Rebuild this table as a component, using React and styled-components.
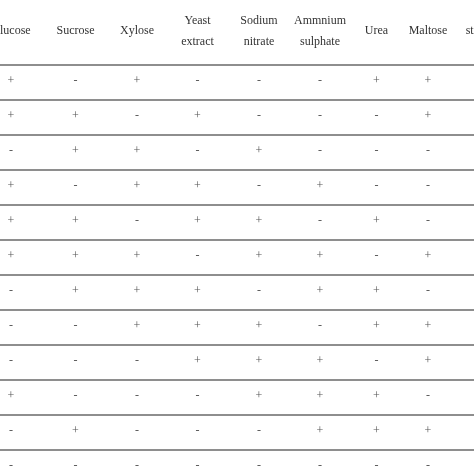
import React from "react";
import styled, { createGlobalStyle } from "styled-components";

const Global = createGlobalStyle`
  html, body {
    margin: 0;
    padding: 0;
    background: #ffffff;
    overflow: hidden;
  }
  body {
    font-family: "Liberation Serif", "Times New Roman", serif;
  }
`;

const COLS = "66px 63px 60px 61px 62px 60px 53px 50px 54px";

const Table = styled.div`
  display: flex;
  flex-direction: column;
  width: 529px;
  margin-left: -22px;
  font-family: "Liberation Serif", "Times New Roman", serif;
  font-size: 12px;
  filter: grayscale(1);
`;

const HeaderRow = styled.div`
  display: grid;
  grid-template-columns: ${COLS};
  height: 64px;
  box-sizing: border-box;
  padding-bottom: 3px;
  align-items: center;
`;

const HeadCell = styled.div`
  text-align: center;
  line-height: 21px;
  color: #333333;
  white-space: nowrap;
`;

const BodyRow = styled.div`
  display: grid;
  grid-template-columns: ${COLS};
  height: 35px;
  box-sizing: border-box;
  border-top: 2px solid #8e8e8e;
  padding-bottom: 5px;
  align-items: center;
`;

const Cell = styled.div`
  text-align: center;
  line-height: 20px;
  color: #555555;
`;

const headers = [
  ["Glucose"],
  ["Sucrose"],
  ["Xylose"],
  ["Yeast", "extract"],
  ["Sodium", "nitrate"],
  ["Ammnium", "sulphate"],
  ["Urea"],
  ["Maltose"],
  ["starch"],
];

const rows = [
  "+-+---++",
  "++-+---+",
  "-++-+---",
  "+-++-+--",
  "++-++-+-",
  "+++-++-+",
  "-+++-++-",
  "--+++-++",
  "---+++-+",
  "+---+++-",
  "-+---+++",
  "--------",
];

export default function App() {
  return (
    <>
      <Global />
      <Table>
        <HeaderRow>
          {headers.map((h, i) => (
            <HeadCell key={i}>
              {h.map((line, j) => (
                <div key={j}>{line}</div>
              ))}
            </HeadCell>
          ))}
        </HeaderRow>
        {rows.map((r, i) => (
          <BodyRow key={i}>
            {r.split("").map((c, j) => (
              <Cell key={j}>{c}</Cell>
            ))}
            <Cell />
          </BodyRow>
        ))}
      </Table>
    </>
  );
}
